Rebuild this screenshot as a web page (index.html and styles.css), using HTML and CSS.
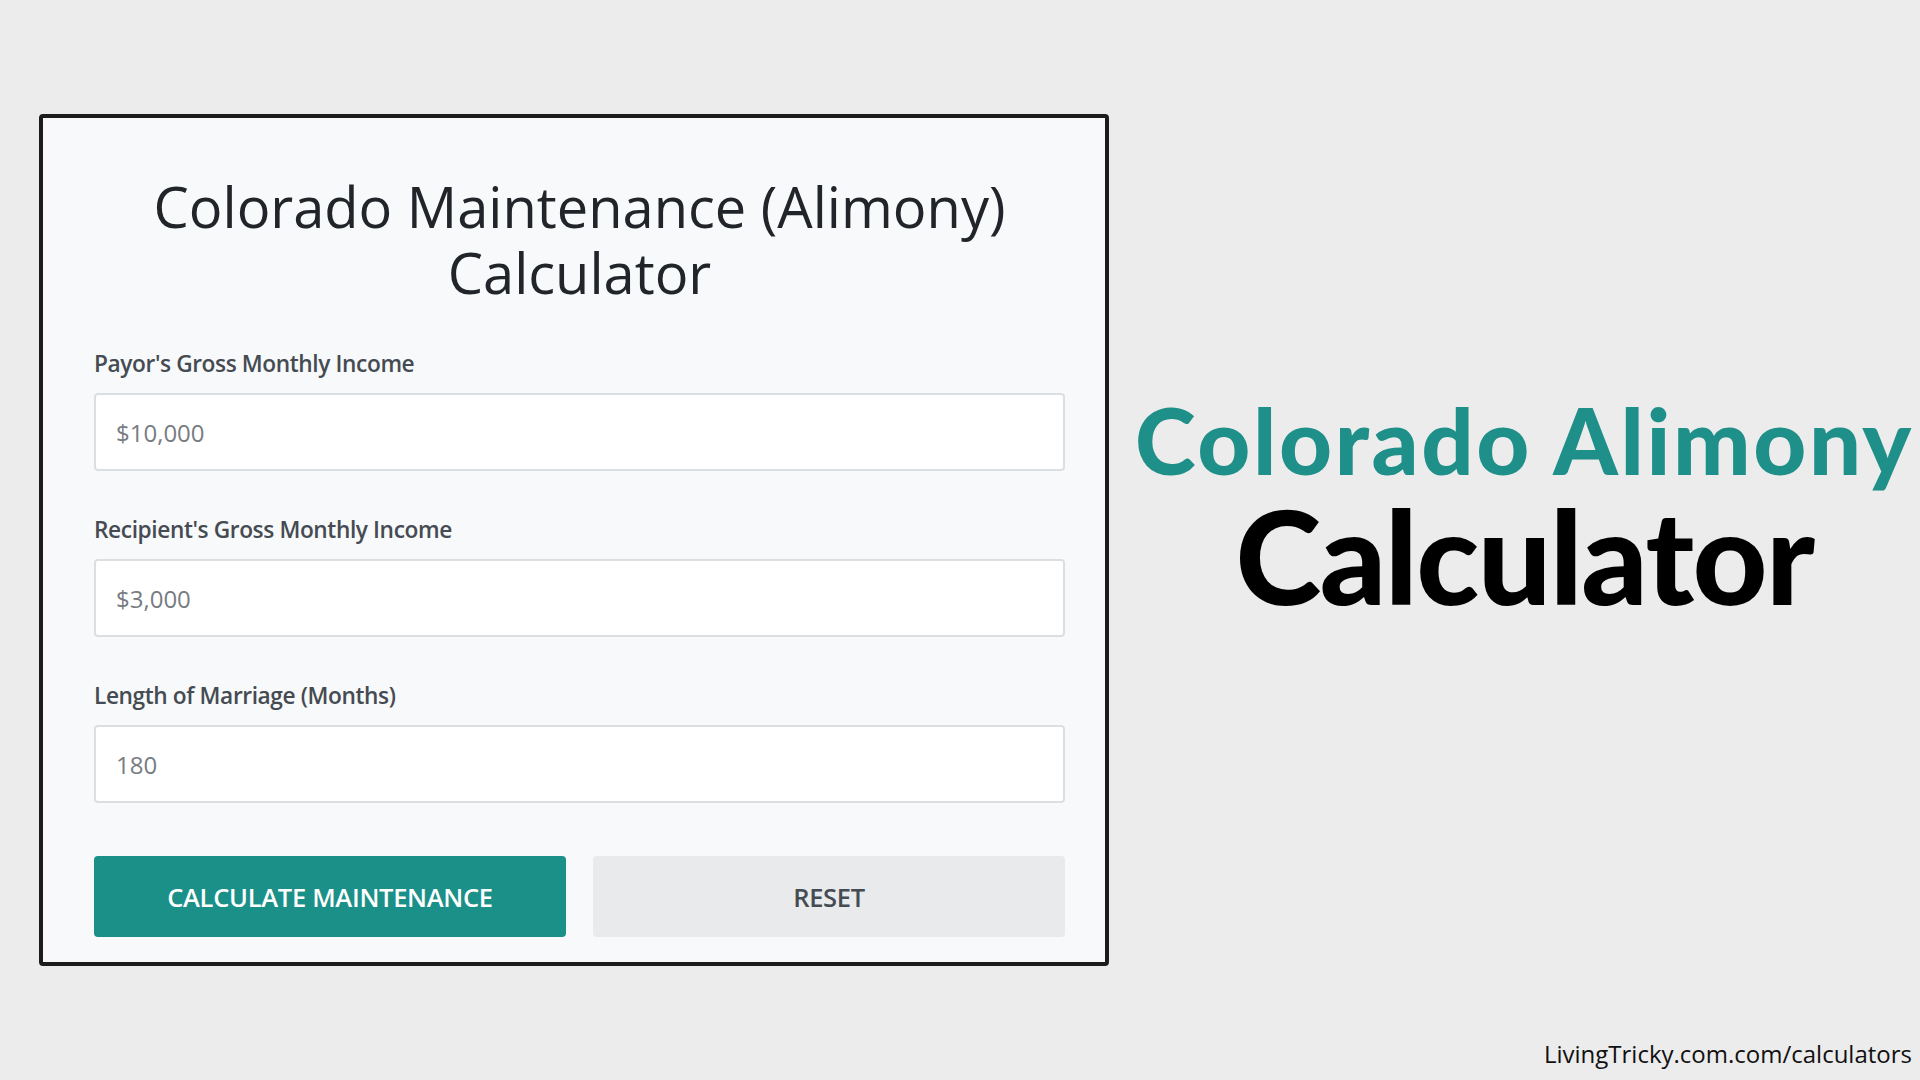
FILE: index.html
```html
<!DOCTYPE html>
<html lang="en">
<head>
<meta charset="utf-8">
<title>Colorado Alimony Calculator</title>
<link rel="stylesheet" href="styles.css">
</head>
<body>
<div class="page">
  <div class="main">
    <section class="card">
      <h1 class="card-title"><span class="title-line">Colorado Maintenance (Alimony)</span><span class="title-line">Calculator</span></h1>
      <div class="field">
        <label class="field-label">Payor's Gross Monthly Income</label>
        <input class="field-input" type="text" placeholder="$10,000">
      </div>
      <div class="field">
        <label class="field-label">Recipient's Gross Monthly Income</label>
        <input class="field-input" type="text" placeholder="$3,000">
      </div>
      <div class="field">
        <label class="field-label">Length of Marriage (Months)</label>
        <input class="field-input" type="text" placeholder="180">
      </div>
      <div class="actions">
        <button class="btn btn-primary">CALCULATE MAINTENANCE</button>
        <button class="btn btn-secondary">RESET</button>
      </div>
    </section>
    <div class="hero">
      <div class="hero-line1">Colorado Alimony</div>
      <div class="hero-line2">Calculator</div>
    </div>
  </div>
  <footer class="footer">LivingTricky.com.com/calculators</footer>
</div>
</body>
</html>
```
FILE: styles.css
```css
* { box-sizing: border-box; }
html, body { margin: 0; padding: 0; }
body {
  background: #ececec;
  font-family: "Open Sans", "Noto Sans", sans-serif;
  width: 1920px;
  height: 1080px;
  overflow: hidden;
}
.page {
  height: 1080px;
  display: flex;
  flex-direction: column;
}
.main {
  display: flex;
  align-items: flex-start;
  padding-top: 114px;
  padding-left: 39px;
}
.card {
  flex: 0 0 1070px;
  width: 1070px;
  height: 852px;
  background: #f8f9fa;
  border: 4px solid #1c1c1c;
  border-radius: 4px;
  padding: 55px 40px 24px 51px;
  display: flex;
  flex-direction: column;
}
.card-title {
  margin: 0 0 44px 0;
  text-align: center;
  font-weight: 400;
  font-size: 56px;
  line-height: 66px;
  color: #212529;
  display: flex;
  flex-direction: column;
}
.title-line { display: block; height: 66px; }
.field {
  display: flex;
  flex-direction: column;
  margin-bottom: 44px;
}
.field-label {
  font-weight: 600;
  font-size: 22.7px;
  line-height: 30px;
  color: #454b52;
  letter-spacing: -0.4px;
  margin-bottom: 14px;
}
.field-input {
  height: 78px;
  border: 2px solid #dcdfe2;
  border-radius: 4px;
  background: #ffffff;
  padding: 0 20px;
  font-family: "Open Sans", "Noto Sans", sans-serif;
  font-size: 24px;
  color: #333;
}
.field-input::placeholder { color: #777c82; }
.actions {
  display: flex;
  gap: 27px;
  margin-top: 9px;
}
.btn {
  flex: 1;
  height: 81px;
  border: none;
  border-radius: 4px;
  font-family: "Open Sans", "Noto Sans", sans-serif;
  font-weight: 600;
  font-size: 25.5px;
  letter-spacing: -0.3px;
}
.btn-primary { background: #1b9088; color: #ffffff; }
.btn-secondary { background: #e8eaec; color: #454b52; }
.hero {
  flex: 1;
  display: flex;
  flex-direction: column;
  align-items: center;
  padding-top: 276px;
  padding-left: 20px;
}
.hero-line1 {
  font-family: "Lato", sans-serif;
  font-weight: 900;
  font-size: 92px;
  line-height: 100px;
  color: #1f8f89;
  letter-spacing: 2.6px;
  white-space: nowrap;
}
.hero-line2 {
  font-family: "Lato", sans-serif;
  font-weight: 900;
  font-size: 130px;
  line-height: 130px;
  color: #000000;
  letter-spacing: -1.5px;
  white-space: nowrap;
}
.footer {
  margin-top: auto;
  align-self: flex-end;
  padding: 0 8px 10px 0;
  font-family: "Open Sans", "Noto Sans", sans-serif;
  font-size: 24px;
  color: #111;
}
```
